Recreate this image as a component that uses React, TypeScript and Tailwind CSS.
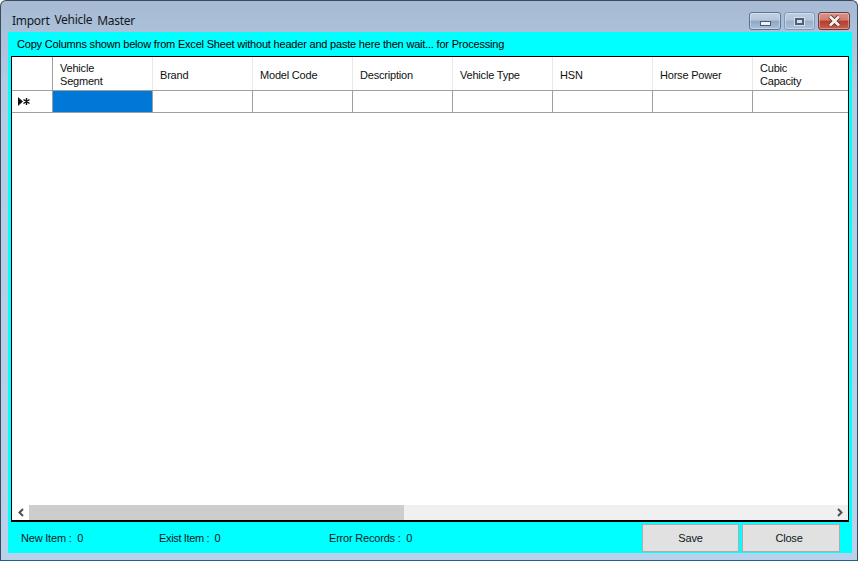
const cols = [["Vehicle", "Segment"], ["Brand"], ["Model Code"], ["Description"], ["Vehicle Type"], ["HSN"], ["Horse Power"], ["Cubic", "Capacity"]];

function WinButton({ kind }: { kind: "min" | "max" | "close" }) {
  const skin =
    kind === "close"
      ? "w-[32px] border-[#6b3a3a] bg-[linear-gradient(#d9938a_0%,#cf7b70_45%,#b83c2c_50%,#c4604f_100%)]"
      : kind === "min"
        ? "w-[32px] border-[#5f7490] bg-[linear-gradient(#c3d2e4_0%,#b4c6dc_45%,#8ea6c4_50%,#a9c0da_100%)]"
        : "w-[31px] border-[#8298b4] bg-[linear-gradient(#bccde2_0%,#b2c6dd_45%,#9ab0cc_50%,#aac1da_100%)]";
  return (
    <div className={`h-[18px] rounded-[3px] border flex items-center justify-center shadow-[inset_0_0_0_1px_rgba(255,255,255,0.35)] ${skin}`}>
      {kind === "min" && <div className="mt-[5px] w-[11px] h-[5px] bg-[#eef2f7] border border-[#4a5a70]" />}
      {kind === "max" && <div className="w-[9px] h-[7px] border-2 border-[#4f6078] bg-[#d6e0ec] outline-1 outline-[#d4deea]" />}
      {kind === "close" && (
        <svg width="15" height="12" viewBox="0 0 15 12">
          <path d="M3 1.5 L12 10.5 M12 1.5 L3 10.5" stroke="#5a2a25" strokeWidth="4.4" />
          <path d="M3 1.5 L12 10.5 M12 1.5 L3 10.5" stroke="#f3f0ee" strokeWidth="2.8" />
        </svg>
      )}
    </div>
  );
}

export default function App() {
  return (
    <div className="w-[858px] h-[562px] overflow-hidden bg-white font-['Liberation_Sans',sans-serif]">
      <div className="h-[561px] flex flex-col rounded-t-[6px] border border-[#3c4a5c] border-b-[#1f5f8a] bg-[linear-gradient(#a6bad3_0%,#b4cbe4_15%,#b9d1ea_100%)] pl-[7px] pr-[5px] pb-[7px]">
        <div className="h-[31px] shrink-0 flex items-start justify-between">
          <div className="mt-[12px] flex gap-[5px] text-[12px] tracking-[-0.3px] leading-[16px] text-[#14181f] font-['Noto_Sans',sans-serif] ml-[4px]">
            <span>Import</span>
            <span className="-mt-[1px]">Vehicle</span>
            <span>Master</span>
          </div>
          <div className="mt-[11px] flex gap-[3px] mr-[2px]">
            <WinButton kind="min" />
            <WinButton kind="max" />
            <WinButton kind="close" />
          </div>
        </div>
        <div className="flex-1 min-h-0 flex flex-col bg-[#00ffff] text-[11px] tracking-[-0.2px] text-black">
          <div className="h-[24px] shrink-0 pl-[9px] pt-[5px] leading-[14px] whitespace-nowrap">
            Copy Columns shown below from Excel Sheet without header and paste here then wait... for Processing
          </div>
          <div className="ml-[3px] mr-[3px] flex-1 min-h-0 flex flex-col bg-white border border-black border-b-2 overflow-hidden">
            <div className="flex-1 min-h-0 overflow-hidden">
              <div className="flex h-[34px] border-b border-[#a0a0a0]">
                <div className="w-[41px] shrink-0 border-r border-[#a0a0a0]" />
                {cols.map((c) => (
                  <div key={c[0]} className={`w-[100px] shrink-0 border-r border-[#e8e8e8] pl-[7px] flex flex-col justify-center leading-[13px] text-[#101010] ${c.length === 1 ? "pt-[4px]" : "pt-[2px]"}`}>
                    {c.map((line) => (
                      <span key={line} className="whitespace-nowrap">{line}</span>
                    ))}
                  </div>
                ))}
              </div>
              <div className="flex h-[22px] border-b border-[#a0a0a0]">
                <div className="w-[41px] shrink-0 border-r border-[#a0a0a0] flex items-center pl-[5px]">
                  <svg width="14" height="9" viewBox="0 0 14 9">
                    <path d="M1 0.5 V8.5 H2 V0.5 Z M2 1 L6 4.5 L2 8 Z" fill="#111" />
                    <path d="M9.5 1 V8 M6.5 2.5 L12.5 6.5 M12.5 2.5 L6.5 6.5" stroke="#111" strokeWidth="1.4" />
                  </svg>
                </div>
                <div className="w-[100px] shrink-0 border-r border-[#a0a0a0] bg-[#0078d7]" />
                {cols.slice(1).map((c) => (
                  <div key={c[0]} className="w-[100px] shrink-0 border-r border-[#a0a0a0]" />
                ))}
              </div>
            </div>
            <div className="h-[15px] shrink-0 flex items-center bg-[#f0f0f0]">
              <div className="w-[17px] h-full shrink-0 bg-white flex items-center justify-center">
                <svg width="8" height="9" viewBox="0 0 8 9"><path d="M6 1 L2.5 4.5 L6 8" fill="none" stroke="#505050" strokeWidth="2" /></svg>
              </div>
              <div className="flex-1 h-full">
                <div className="w-[375px] h-full bg-[#cdcdcd]" />
              </div>
              <div className="w-[17px] h-full shrink-0 flex items-center justify-center">
                <svg width="8" height="9" viewBox="0 0 8 9"><path d="M2 1 L5.5 4.5 L2 8" fill="none" stroke="#505050" strokeWidth="2" /></svg>
              </div>
            </div>
          </div>
          <div className="h-[31px] shrink-0 flex items-center pl-[13px] pr-[12px] text-[#0a1a1a]">
            <div className="w-[138px] pt-[2px] whitespace-pre">New Item :  0</div>
            <div className="w-[170px] pt-[2px] tracking-[-0.35px] whitespace-pre">Exist Item :  0</div>
            <div className="pt-[2px] whitespace-pre">Error Records :  0</div>
            <div className="ml-auto flex gap-[3px]">
              <div className="w-[97px] h-[28px] pt-[2px] bg-[#e1e1e1] border border-[#adadad] flex items-center justify-center">Save</div>
              <div className="w-[98px] h-[28px] pt-[2px] pr-[4px] bg-[#e1e1e1] border border-[#adadad] flex items-center justify-center">Close</div>
            </div>
          </div>
        </div>
      </div>
    </div>
  );
}
